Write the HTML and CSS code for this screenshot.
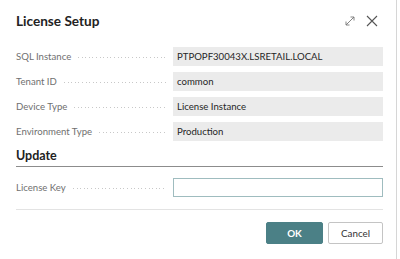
FILE: index.html
```html
<!DOCTYPE html>
<html>
<head>
<meta charset="utf-8">
<link rel="stylesheet" href="styles.css">
</head>
<body>
<div class="dialog">
  <div class="header">
    <h1 class="title">License Setup</h1>
    <div class="actions">
      <svg class="icon" width="12" height="12" viewBox="0 0 12 12"><path d="M2 10 L10 2 M6.5 2 H10 V5.5 M2 6.5 V10 H5.5" fill="none" stroke="#777" stroke-width="0.9"/></svg>
      <svg class="icon" width="12" height="12" viewBox="0 0 12 12"><path d="M1 1 L11 11 M11 1 L1 11" fill="none" stroke="#555" stroke-width="1.1"/></svg>
    </div>
  </div>
  <div class="rows">
    <div class="row"><span class="label">SQL Instance</span><span class="dots"></span><span class="value">PTPOPF30043X.LSRETAIL.LOCAL</span></div>
    <div class="row"><span class="label">Tenant ID</span><span class="dots"></span><span class="value">common</span></div>
    <div class="row"><span class="label">Device Type</span><span class="dots"></span><span class="value">License Instance</span></div>
    <div class="row"><span class="label">Environment Type</span><span class="dots"></span><span class="value">Production</span></div>
  </div>
  <h2 class="section">Update</h2>
  <div class="row key"><span class="label">License Key</span><span class="dots"></span><span class="input"></span></div>
  <div class="footer">
    <button class="btn primary">OK</button>
    <button class="btn">Cancel</button>
  </div>
</div>
</body>
</html>
```
FILE: styles.css
```css
html, body { margin: 0; padding: 0; background: #fff; }
body { font-family: "Lato", "Open Sans", sans-serif; color: #333; }
.dialog {
  width: 397px; height: 259px; box-sizing: border-box;
  border-right: 1px solid #d6d6d6;
  padding: 0 13px 0 16px;
}
.header { display: flex; align-items: center; justify-content: space-between; height: 42px; }
.title { margin: 0; font-size: 13.6px; font-weight: 700; color: #222; }
.actions { display: flex; gap: 10px; align-items: center; padding-right: 5px; }
.icon { display: block; }
.rows { display: flex; flex-direction: column; gap: 6px; margin-top: 5px; }
.row { display: flex; align-items: center; height: 19px; }
.label { font-size: 9.6px; color: #707070; white-space: nowrap; }
.dots {
  flex: 1; height: 1px; margin: 2px 6px 0 7px;
  background: repeating-linear-gradient(to right, #c8c8c8 0 1px, transparent 1px 3.6px);
}
.value {
  width: 210px; height: 19px; box-sizing: border-box; background: #ebebeb;
  font-size: 9.6px; color: #262626; padding: 0 4px; line-height: 19px; flex: none;
}
.section {
  margin: 6px 0 0 0; font-size: 12.5px; font-weight: 700; color: #222;
  padding-bottom: 2px; border-bottom: 1px solid #8c8c8c; line-height: 17px;
}
.key { margin-top: 11px; padding-bottom: 12px; border-bottom: 1px solid #e3e3e3; height: 19px; }
.input { width: 210px; height: 19px; box-sizing: border-box; border: 1px solid #9fbcbf; flex: none; background: #fff; }
.footer { display: flex; justify-content: flex-end; gap: 5px; margin-top: 12px; }
.btn {
  font-family: inherit; font-size: 9.8px; height: 22px; width: 55px;
  border: 1px solid #c4c4c4; background: #fff; color: #333; border-radius: 2px; padding: 0;
}
.btn.primary { background: #4b8086; border-color: #4b8086; color: #fff; font-weight: 700; width: 57px; }
```
